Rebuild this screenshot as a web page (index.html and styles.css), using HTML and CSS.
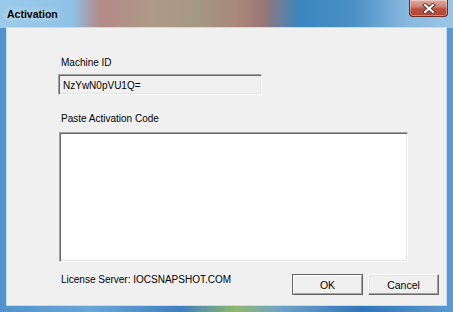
FILE: index.html
```html
<!DOCTYPE html>
<html lang="en">
<head>
    <meta charset="UTF-8">
    <title>Activation</title>
    <link rel="stylesheet" href="styles.css">
</head>
<body>
    <div class="window">
        <div class="titlebar">
            <span class="title">Activation</span>
            <button class="close-btn" aria-label="Close">
                <svg width="14" height="11" viewBox="0 0 14 11">
                    <path d="M3 2 L11 9 M11 2 L3 9" stroke="#5a3a3a" stroke-width="4" stroke-linecap="square"/>
                    <path d="M3 2 L11 9 M11 2 L3 9" stroke="#ffffff" stroke-width="2" stroke-linecap="square"/>
                </svg>
            </button>
        </div>
        <div class="client">
            <label class="field-label">Machine ID</label>
            <input class="machine-id" type="text" value="NzYwN0pVU1Q=" readonly>
            <label class="field-label paste-label">Paste Activation Code</label>
            <textarea class="code-box"></textarea>
            <div class="bottom-row">
                <span class="license">License Server: IOCSNAPSHOT.COM</span>
                <div class="buttons">
                    <button class="btn btn-default">OK</button>
                    <button class="btn">Cancel</button>
                </div>
            </div>
        </div>
    </div>
</body>
</html>
```

FILE: styles.css
```css
/* Page reset */
body {
    margin: 0;
    width: 453px;
    height: 312px;
    overflow: hidden;
    font-family: "Liberation Sans", Arial, sans-serif;
    font-size: 10px;
    color: #000;
}
/* Aero style window frame */
.window {
    width: 453px;
    height: 312px;
    display: flex;
    flex-direction: column;
    background: linear-gradient(90deg, #4f93cc 0%, #6aa6d6 20%, #3f7fbf 40%, #8fb86e 52%, #6fa3c8 62%, #2f75b8 80%, #5d9ad0 100%);
}
/* Title bar */
.titlebar {
    height: 28px;
    display: flex;
    align-items: flex-start;
    justify-content: space-between;
    background: linear-gradient(90deg, #9ccbea 0%, #8ec2e6 16%, #b48a88 22%, #ae9a86 34%, #a59882 44%, #a88478 54%, #9a7676 58%, #3b86c0 66%, #4a90c6 78%, #88b9df 90%, #9cc6e6 100%);
}
.title {
    margin: 8px 0 0 7px;
    font-size: 10.5px;
    font-weight: bold;
    color: #000;
    text-shadow: 0 0 6px rgba(255, 255, 255, 0.8);
}
/* Close button */
.close-btn {
    width: 39px;
    height: 17px;
    margin-right: 5px;
    padding: 0;
    border: 1px solid #6b2a22;
    border-top: none;
    border-radius: 0 0 4px 4px;
    background: linear-gradient(180deg, #e0aaa0 0%, #d08478 40%, #bf5040 55%, #b04434 100%);
    display: flex;
    align-items: center;
    justify-content: center;
    box-shadow: inset 0 0 0 1px rgba(255, 255, 255, 0.35);
}
/* Client area */
.client {
    flex: 1;
    margin: 0 7px 7px 7px;
    padding: 28px 7px 0 51px;
    background-color: #f0f0f0;
    box-shadow: 0 0 0 1px #c9dcec;
    display: flex;
    flex-direction: column;
    align-items: flex-start;
}
.field-label {
    line-height: 14px;
    margin-left: 3px;
}
.paste-label {
    margin-top: 17px;
}
/* Sunken text boxes */
.machine-id,
.code-box {
    box-sizing: border-box;
    margin: 4px 0 0 0;
    font-family: "Liberation Sans", Arial, sans-serif;
    font-size: 10px;
    color: #000;
    border-top: 1px solid #a0a0a0;
    border-left: 1px solid #a0a0a0;
    border-bottom: 1px solid #ffffff;
    border-right: 1px solid #ffffff;
    box-shadow: inset 1px 1px 0 #696969, inset -1px -1px 0 #e3e3e3;
    outline: none;
}
.machine-id {
    width: 204px;
    height: 21px;
    padding: 1px 4px 0 4px;
    background-color: #f0f0f0;
}
.code-box {
    width: 349px;
    height: 130px;
    margin-top: 6px;
    margin-left: 1px;
    background-color: #ffffff;
    resize: none;
}
/* Bottom row with license text and buttons */
.bottom-row {
    align-self: stretch;
    margin-top: 11px;
    display: flex;
    justify-content: space-between;
    align-items: flex-start;
}
.license {
    margin: 0 0 0 3px;
    line-height: 14px;
}
.buttons {
    display: flex;
    gap: 5px;
    margin-top: 1px;
}
.btn {
    box-sizing: border-box;
    width: 71px;
    height: 21px;
    padding: 0;
    font-family: "Liberation Sans", Arial, sans-serif;
    font-size: 10.5px;
    color: #000;
    background-color: #f0f0f0;
    border-top: 1px solid #ffffff;
    border-left: 1px solid #ffffff;
    border-bottom: 1px solid #696969;
    border-right: 1px solid #696969;
    box-shadow: inset -1px -1px 0 #a0a0a0, inset 1px 1px 0 #e3e3e3;
}
.btn-default {
    border: 1px solid #646464;
    box-shadow: inset 1px 1px 0 #ffffff, inset -1px -1px 0 #a0a0a0;
}
```
